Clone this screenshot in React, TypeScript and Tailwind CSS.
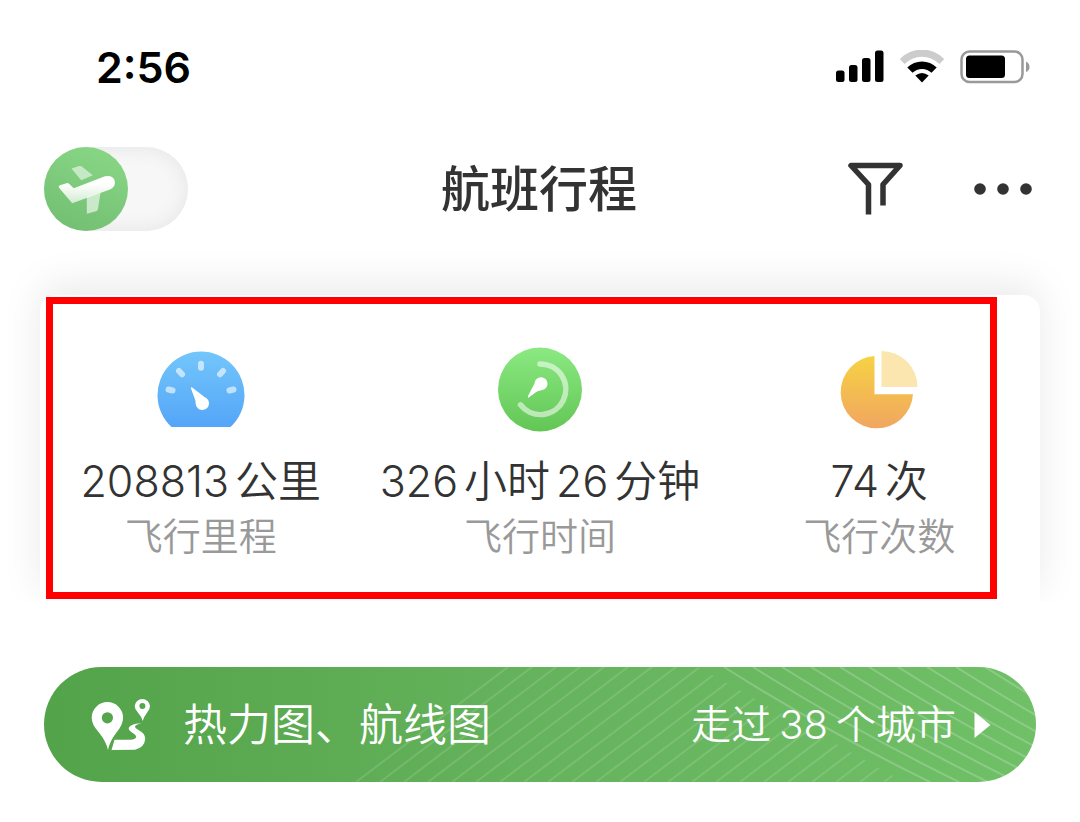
import React from 'react';

const SignalIcon: React.FC = () => (
  <svg width="48" height="34" viewBox="0 0 48 34" aria-hidden="true">
    <rect x="0" y="20.500" width="8.5" height="11.5" rx="2.5" />
    <rect x="13" y="15" width="8.5" height="17" rx="2.5" />
    <rect x="26" y="8" width="8.5" height="24" rx="2.5" />
    <rect x="39" y="0.500" width="8.5" height="31.5" rx="2.5" />
  </svg>
);

const WifiIcon: React.FC = () => (
  <svg width="46" height="34" viewBox="0 0 46 34" aria-hidden="true">
    <path d="M0.800 9 A31 31 0 0 1 45.200 9 L40.500 14 A25 25 0 0 0 5.500 14 Z" fill="#cccccc" />
    <path d="M8.300 17.500 A21 21 0 0 1 37.700 17.500 L32.500 22.800 A13.500 13.500 0 0 0 13.500 22.800 Z" />
    <path d="M16.300 25.500 Q23 20.500 29.700 25.500 L23 32.500 Z" />
  </svg>
);

const BatteryIcon: React.FC = () => (
  <svg width="70" height="34" viewBox="0 0 70 34" aria-hidden="true">
    <rect x="1.500" y="1.500" width="61" height="30.500" rx="8" fill="none" stroke="#999999" strokeWidth="2.500" />
    <rect x="6" y="5.500" width="39" height="22.500" rx="3.500" />
    <path d="M66 11.500 Q69.500 13 69.500 17 Q69.500 20.500 66 22 Z" fill="#999999" />
  </svg>
);

const PlaneIcon: React.FC = () => (
  <svg width="84" height="84" viewBox="0 0 84 84" aria-hidden="true">
    <defs>
      <linearGradient id="knob" x1="0.7" y1="0" x2="0.3" y2="1">
        <stop offset="0" stopColor="#87d685" />
        <stop offset="1" stopColor="#74bf73" />
      </linearGradient>
      <linearGradient id="body" x1="0" y1="0" x2="0" y2="1">
        <stop offset="0.3" stopColor="#fff" />
        <stop offset="1" stopColor="#fff" stopOpacity="0.650" />
      </linearGradient>
    </defs>
    <circle cx="42" cy="42" r="42" fill="url(#knob)" />
    <path d="M27.500 21.500 L35 19 Q37 18.500 38.500 20 L48.800 28.300 L37.200 33.300 Z" fill="#fff" fillOpacity="0.550" />
    <path d="M42.800 50 L56.500 45.500 L54 62 Q53.500 63.700 52 64.200 L42.800 66.700 Z" fill="#fff" fillOpacity="0.600" />
    <path
      d="M14.800 40.500 Q14.300 38.800 16 38.200 L22.500 36.200 Q24 35.800 25 36.800 L29.800 41.300 L61 29.300 Q68.500 27.500 70.700 33.500 Q71.800 40 66 42.500 L28.200 56.300 Z"
      fill="url(#body)"
    />
  </svg>
);

const FilterIcon: React.FC = () => (
  <svg width="60" height="60" viewBox="0 0 60 60" aria-hidden="true">
    <path
      d="M22.500 55.500 V25.500 L5 6.500 H54 L37 25.500 V46.500"
      fill="none"
      stroke="#333333"
      strokeWidth="5.500"
      strokeLinejoin="round"
    />
  </svg>
);

const MoreIcon: React.FC = () => (
  <svg width="60" height="60" viewBox="0 0 60 60" fill="#333333" aria-hidden="true">
    <circle cx="6" cy="30" r="5.800" />
    <circle cx="29" cy="30" r="5.800" />
    <circle cx="52" cy="30" r="5.800" />
  </svg>
);

const GaugeIcon: React.FC = () => (
  <svg width="88" height="88" viewBox="0 0 88 88" aria-hidden="true">
    <defs>
      <linearGradient id="gauge" x1="0" y1="0" x2="0" y2="1">
        <stop offset="0" stopColor="#73c6fa" />
        <stop offset="1" stopColor="#54a5f8" />
      </linearGradient>
    </defs>
    <path d="M14.500 81 A43.500 43.500 0 1 1 73.500 81 Z" fill="url(#gauge)" />
    <g stroke="#fff" strokeOpacity="0.600" strokeWidth="6" strokeLinecap="round">
      <path d="M11.500 43.500 L15.500 44.500" />
      <path d="M22 25 L25 28.200" />
      <path d="M44 17.700 V21.700" />
      <path d="M66 25 L63 28.200" />
      <path d="M76.500 43.500 L72.500 44.500" />
    </g>
    <path d="M33.800 42 Q34 40.800 35.500 41.800 L47.500 51 A6.700 6.700 0 1 1 38.700 58 Q38.700 54.500 37.500 52 Z" fill="#fff" />
  </svg>
);

const ClockIcon: React.FC = () => (
  <svg width="88" height="88" viewBox="0 0 88 88" aria-hidden="true">
    <defs>
      <linearGradient id="clock" x1="0" y1="0" x2="0" y2="1">
        <stop offset="0" stopColor="#8be982" />
        <stop offset="1" stopColor="#62c655" />
      </linearGradient>
    </defs>
    <circle cx="44" cy="43.500" r="42" fill="url(#clock)" />
    <path
      d="M44 18 A25.300 25.300 0 1 1 24.500 58.800"
      fill="none"
      stroke="#fff"
      strokeOpacity="0.550"
      strokeWidth="5.500"
      strokeLinecap="round"
    />
    <path d="M32.500 51.800 Q31.500 51.500 32 50 L38.500 37.500 A6.500 6.500 0 1 1 45.500 44.200 Q42 44.500 39.500 46.500 Z" fill="#fff" />
  </svg>
);

const PieIcon: React.FC = () => (
  <svg width="88" height="88" viewBox="0 0 88 88" aria-hidden="true">
    <defs>
      <linearGradient id="pie" x1="0" y1="0" x2="0" y2="1">
        <stop offset="0" stopColor="#f6d243" />
        <stop offset="1" stopColor="#f1a660" />
      </linearGradient>
    </defs>
    <path d="M39.500 10 A36.200 36.200 0 1 0 78 48.300 H39.500 Z" fill="url(#pie)" />
    <path d="M46.500 5 A36 36 0 0 1 82.500 41 H46.500 Z" fill="#fae6ae" />
  </svg>
);

const RouteIcon: React.FC = () => (
  <svg width="60" height="56" viewBox="0 0 60 56" fill="#fff" aria-hidden="true">
    <path
      fillRule="evenodd"
      d="M18 53 Q16 44 8.500 35 Q1.700 27.500 1.700 20.800 A15.700 15.700 0 0 1 33.100 20.800 Q33.100 27.500 26.500 35.500 Q19.800 44 18 53 Z M17.400 15.200 A5.600 5.600 0 1 0 17.400 26.400 A5.600 5.600 0 1 0 17.400 15.200 Z"
    />
    <path
      fillRule="evenodd"
      d="M52.700 24 Q51.500 19.500 47.500 15 Q44.700 11.700 44.700 8.900 A7.700 7.700 0 0 1 60 8.900 Q60 11.700 57.500 15 Q54 19.500 52.700 24 Z M52.400 6 A3 3 0 1 0 52.400 12 A3 3 0 1 0 52.400 6 Z"
    />
    <path d="M24.500 42.700 H41 Q47 42 46 39 Q45.500 37.500 42 35.500 Q36.500 32 40 29.200 Q43.500 26.500 52 26 Q45.500 27.500 45 29.500 Q45 31 48.500 33 Q55.500 36.500 55.200 42 Q54.500 50.500 45 52.700 L21.500 53 Z" />
  </svg>
);

// hatch on the right part of the banner: two sets of stripes meeting on a diagonal
const BannerStripes: React.FC = () => (
  <svg
    className="pointer-events-none absolute right-0 top-0 h-full"
    width="700"
    height="115"
    viewBox="0 0 700 115"
    fill="none"
    stroke="#fff"
    aria-hidden="true"
  >
    <clipPath id="left-part">
      <path d="M0 0 H362 L568 115 H0 Z" />
    </clipPath>
    <g clipPath="url(#left-part)" strokeOpacity="0.130" strokeWidth="2">
      {Array.from({ length: 23 }, (_, i) => (
        <path key={i} d={`M${20 + i * 24} 115 l152 -115`} />
      ))}
    </g>
    <g strokeOpacity="0.200" strokeWidth="2">
      {Array.from({ length: 11 }, (_, i) => (
        <path key={i} d={`M${388 + i * 29} 0 q96 61 206 115`} />
      ))}
    </g>
  </svg>
);

interface StatProps {
  icon: React.ReactNode;
  parts: string[];
  label: string;
}

const Stat: React.FC<StatProps> = ({ icon, parts, label }) => (
  <div className="flex flex-col items-center">
    {icon}
    <p className="mt-5 flex gap-1.5 whitespace-nowrap text-[43px] font-[350] leading-[54px] text-[#333333]">
      {parts.map((part) => (
        <span key={part}>{part}</span>
      ))}
    </p>
    <p className="mt-1 whitespace-nowrap text-[38px] font-[350] leading-[48px] text-[#999999]">{label}</p>
  </div>
);

const stats: StatProps[] = [
  { icon: <GaugeIcon />, parts: ['208813', '公里'], label: '飞行里程' },
  { icon: <ClockIcon />, parts: ['326', '小时', '26', '分钟'], label: '飞行时间' },
  { icon: <PieIcon />, parts: ['74', '次'], label: '飞行次数' },
];

export default function App() {
  return (
    <main className="min-h-screen bg-white pt-8 pb-8 font-[Inter,'Noto_Sans_CJK_SC',sans-serif]">
      {/* Status bar */}
      <div className="flex h-[70px] items-center justify-between pl-24 pr-[50px]">
        <span className="text-[43px] font-semibold leading-none text-black">2:56</span>
        <div className="flex items-center gap-[15px]">
          <SignalIcon />
          <WifiIcon />
          <BatteryIcon />
        </div>
      </div>

      {/* Header */}
      <header className="mt-[45px] grid grid-cols-[1fr_auto_1fr] items-center pl-11 pr-[46px]">
        <label className="flex w-36 cursor-pointer rounded-full bg-[#f7f7f8] shadow-[inset_0_0_20px_#e4e4e4]">
          <input type="checkbox" className="sr-only" aria-label="飞行模式" />
          <PlaneIcon />
        </label>
        <h1 className="text-[49px] font-medium leading-none text-[#333333]">航班行程</h1>
        <div className="flex items-center justify-end gap-[68px]">
          <button type="button" aria-label="筛选">
            <FilterIcon />
          </button>
          <button type="button" aria-label="更多">
            <MoreIcon />
          </button>
        </div>
      </header>

      {/* Stats card, its shadow is cut off at the bottom */}
      <section className="overflow-hidden px-10 pt-16">
        <div className="relative grid grid-cols-[9fr_10fr_9fr] rounded-t-2xl bg-white pt-[51px] pb-[41px] shadow-[0_-10px_40px_#00000016]">
          {stats.map((stat) => (
            <Stat key={stat.label} {...stat} />
          ))}
          <div className="pointer-events-none absolute top-0.5 bottom-0.5 left-1.5 right-[43px] border-[7px] border-[#ff0000]" />
        </div>
      </section>

      {/* Map banner */}
      <div className="mt-[66px] px-11">
        <a
          href="#map"
          className="relative flex h-[115px] items-center justify-between overflow-hidden rounded-full bg-linear-to-r from-[#53a34a] via-[#65b35c] to-[#70c068] pl-[46px] pr-[45px] font-[350] text-white"
        >
          <BannerStripes />
          <span className="relative flex items-center gap-[33px] text-[44px] leading-none">
            <RouteIcon />
            热力图、航线图
          </span>
          <span className="relative flex items-center gap-2 text-[40px] leading-none">
            <span>走过</span>
            <span>38</span>
            <span>个城市</span>
            <svg className="ml-2.5" width="17" height="28" viewBox="0 0 17 28" fill="#fff" aria-hidden="true">
              <path d="M0.500 1 L16.500 14 L0.500 27 Z" />
            </svg>
          </span>
        </a>
      </div>
    </main>
  );
}
